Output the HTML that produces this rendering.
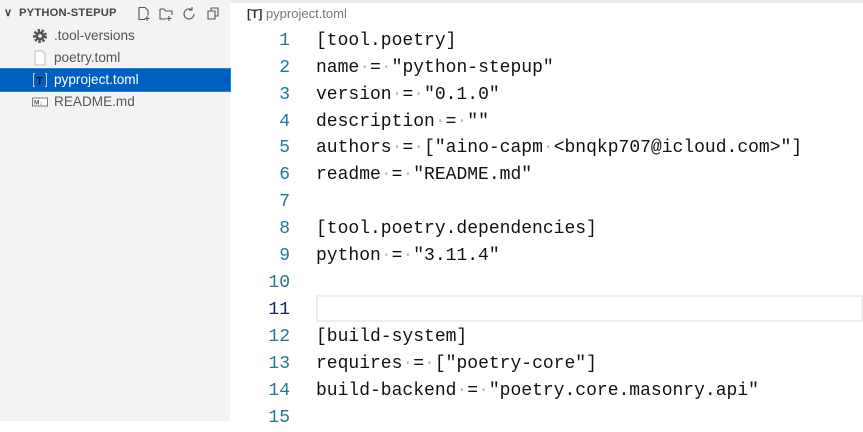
<!DOCTYPE html>
<html><head><style>
*{margin:0;padding:0;box-sizing:border-box}
body{width:863px;height:421px;overflow:hidden;background:#fff;font-family:"Liberation Sans",sans-serif;position:relative}
#side{position:absolute;left:0;top:0;width:230px;height:421px;background:#f3f3f3}
.hdr{position:absolute;top:6px;left:4px;font-size:11.2px;font-weight:bold;color:#444;letter-spacing:.2px}
.row{position:absolute;left:0;width:230px;height:22px;font-size:13.6px;color:#555;line-height:22px;padding-left:54px}
.row .ic{position:absolute;left:32px;top:3px;width:16px;height:16px}
.sel{background:#0060c0;color:#fff;outline:1px solid #2a7fd4}
#tab{position:absolute;left:230px;top:0;width:633px;height:3px;background:#ececec}
.tabt{position:absolute;left:247px;top:6px;font-size:13px;color:#777}
.code{position:absolute;left:230px;top:28px;font-family:"Liberation Mono",monospace;font-size:18px}
.ln{position:absolute;left:0;width:60px;text-align:right;color:#237893;height:27px;line-height:27px}
.tx{position:absolute;left:86px;white-space:pre;color:#111;height:27px;line-height:27px}
.d{color:#bbb}
</style></head><body>
<div id="side">
<div class="hdr">∨&nbsp; PYTHON-STEPUP</div>
<svg style="position:absolute;left:136px;top:6px" width="90" height="16" fill="none" stroke="#555" stroke-width="1.1">
<path d="M3 1.5h6l3 3v5M3 1.5v12h6M11 10v5M8.5 12.5h5"/>
<path d="M24 3h4l1.5 2H36v4M24 3v10h6M33 10v5M30.5 12.5h5"/>
<path d="M56 4a5 5 0 1 0 2 4M56 1v3h-3"/>
<path d="M72 5h7v8h-7zM75 5V2h7v8h-3"/>
</svg>
<div class="row" style="top:25px"><svg class="ic" viewBox="0 0 16 16"><circle cx="8" cy="8" r="5.5" fill="none" stroke="#555" stroke-width="3" stroke-dasharray="2.4 1.5"/><circle cx="8" cy="8" r="4.5" fill="#555"/><circle cx="8" cy="8" r="1.8" fill="#f3f3f3"/></svg>.tool-versions</div>
<div class="row" style="top:47px"><svg class="ic" viewBox="0 0 16 16"><path d="M3 1h7l3 3v11H3z" fill="#fff" stroke="#bbb"/></svg>poetry.toml</div>
<div class="row sel" style="top:69px"><svg class="ic" viewBox="0 0 16 16"><path d="M3 1.5H1.5v13H3M13 1.5h1.5v13H13" stroke="#ccc" fill="none"/><text x="4.2" y="12.5" font-size="11" font-weight="bold" fill="#111" font-family="Liberation Sans">T</text></svg>pyproject.toml</div>
<div class="row" style="top:91px"><svg class="ic" viewBox="0 0 16 16"><rect x="0.5" y="4" width="15" height="8" fill="#fff" stroke="#777"/><text x="2" y="10.5" font-size="6.5" font-weight="bold" fill="#555" font-family="Liberation Sans">M↓</text></svg>README.md</div>
</div>
<div id="tab"></div>
<div class="tabt"><span style="color:#333;font-weight:bold;font-size:12px">[T]</span> pyproject.toml</div>
<div style="position:absolute;left:316px;top:295px;width:547px;height:27px;border:2px solid #eee"></div>
<div class="code">
<div class="ln" style="top:0">1</div><div class="tx" style="top:0">[tool.poetry]</div>
<div class="ln" style="top:27px">2</div><div class="tx" style="top:27px">name<span class="d">·</span>=<span class="d">·</span>"python-stepup"</div>
<div class="ln" style="top:54px">3</div><div class="tx" style="top:54px">version<span class="d">·</span>=<span class="d">·</span>"0.1.0"</div>
<div class="ln" style="top:81px">4</div><div class="tx" style="top:81px">description<span class="d">·</span>=<span class="d">·</span>""</div>
<div class="ln" style="top:107px">5</div><div class="tx" style="top:107px">authors<span class="d">·</span>=<span class="d">·</span>["aino-capm<span class="d">·</span>&lt;bnqkp707@icloud.com&gt;"]</div>
<div class="ln" style="top:134px">6</div><div class="tx" style="top:134px">readme<span class="d">·</span>=<span class="d">·</span>"README.md"</div>
<div class="ln" style="top:161px">7</div>
<div class="ln" style="top:188px">8</div><div class="tx" style="top:188px">[tool.poetry.dependencies]</div>
<div class="ln" style="top:215px">9</div><div class="tx" style="top:215px">python<span class="d">·</span>=<span class="d">·</span>"3.11.4"</div>
<div class="ln" style="top:242px">10</div>
<div class="ln" style="top:269px;color:#0b216f">11</div>
<div class="ln" style="top:296px">12</div><div class="tx" style="top:296px">[build-system]</div>
<div class="ln" style="top:323px">13</div><div class="tx" style="top:323px">requires<span class="d">·</span>=<span class="d">·</span>["poetry-core"]</div>
<div class="ln" style="top:350px">14</div><div class="tx" style="top:350px">build-backend<span class="d">·</span>=<span class="d">·</span>"poetry.core.masonry.api"</div>
<div class="ln" style="top:377px">15</div>
</div>
</body></html>
